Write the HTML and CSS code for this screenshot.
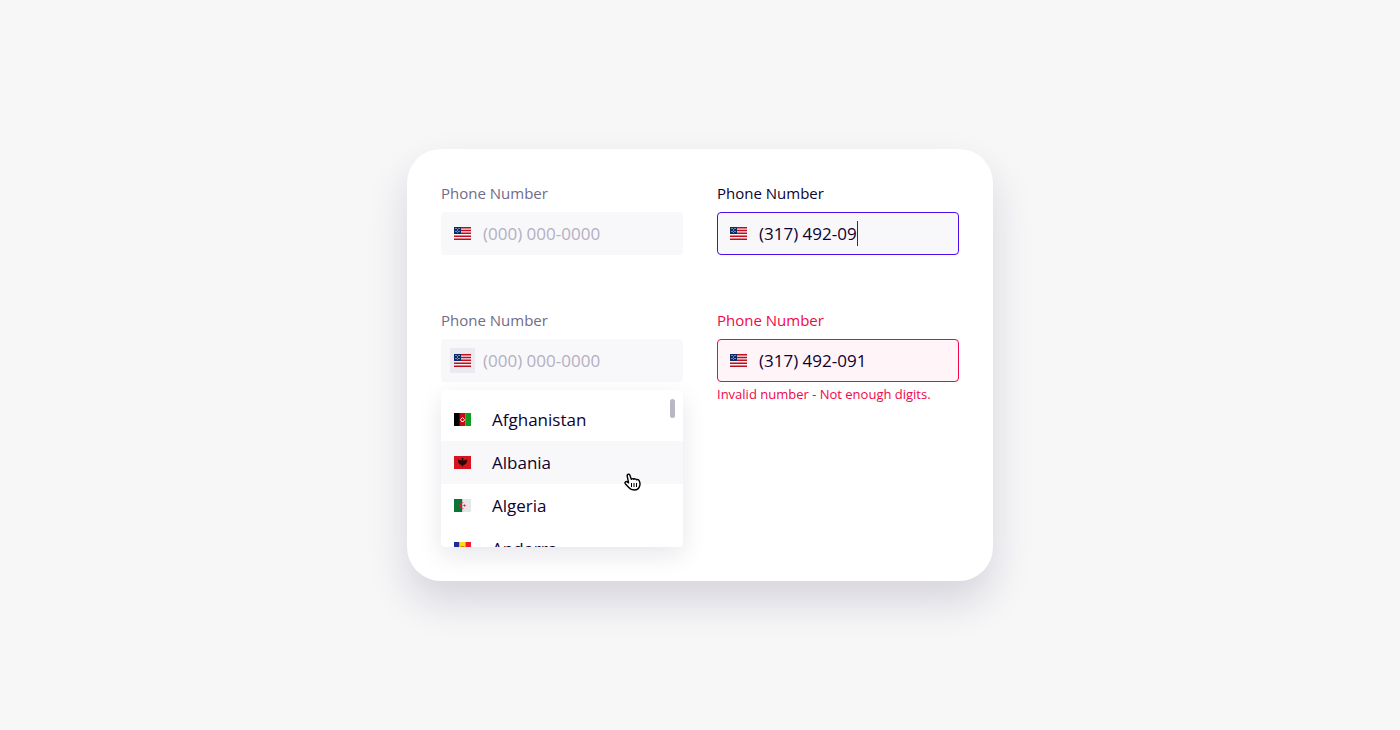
FILE: index.html
```html
<!DOCTYPE html>
<html lang="en">
<head>
<meta charset="utf-8">
<meta name="viewport" content="width=device-width, initial-scale=1">
<title>Phone Number</title>
<link rel="stylesheet" href="styles.css">
</head>
<body>
<svg class="sprite" aria-hidden="true">
  <symbol id="flag-us" viewBox="0 0 34 26">
    <path fill="#f3f0f0" d="M0 0h34v26H0z"/>
    <path fill="#c20b1c" d="M0 0h34v3H0zM0 5.7h34v2.7H0zM0 11.2h34v2.7H0zM0 17h34v3H0zM0 23h34v3H0z"/>
    <path fill="#0b2a66" d="M0 0h14v14H0z"/>
    <path fill="#dfe5f2" d="M3 2h2v2H3zM9 2h2v2H9zM6 5h2v2H6zM3 8h2v2H3zM9 8h2v2H9zM6 11h2v1H6z"/>
  </symbol>
  <symbol id="flag-af" viewBox="0 0 34 26">
    <path fill="#000" d="M0 0h12v26H0z"/>
    <path fill="#c20b14" d="M11 0h12v26H11z"/>
    <path fill="#0f9b1e" d="M23 0h11v26H23z"/>
    <path fill="none" stroke="#fff" stroke-width="2" d="M17 9l-4 4 2 4h4l2-4z"/>
  </symbol>
  <symbol id="flag-al" viewBox="0 0 34 26">
    <path fill="#d9141f" d="M0 0h34v26H0z"/>
    <path fill="#2a0508" d="M16 9l-1-5h4l-1 5 9-2-2 7-3 3-3 1-2 4-2-4-3-1-3-3-2-7z"/>
  </symbol>
  <symbol id="flag-dz" viewBox="0 0 34 26">
    <path fill="#0b7539" d="M0 0h17v26H0z"/>
    <path fill="#e6e6e6" d="M17 0h17v26H17z"/>
    <path fill="#e01835" d="M20 7a6.500 6.500 0 1 0 0 12 5.500 5.500 0 1 1 0-12z"/>
    <path fill="#e01835" d="M17 13l3-1 1-2 1 2 3 1-3 1-1 2-1-2z"/>
  </symbol>
  <symbol id="flag-ad" viewBox="0 0 34 26">
    <path fill="#1d2d91" d="M0 0h11v26H0z"/>
    <path fill="#fcdc0b" d="M11 0h12v26H11z"/>
    <path fill="#ee1c34" d="M23 0h11v26H23z"/>
    <path fill="#d9822b" d="M13 8h8v7l-4 3-4-3z"/>
    <path fill="#c8304a" d="M14 10h6v4h-6z"/>
  </symbol>
</svg>

<main class="card">
  <div class="field">
    <label class="field__label" for="phone-default">Phone Number</label>
    <div class="control">
      <button class="control__country" type="button" aria-label="United States"><svg class="flag"><use href="#flag-us"/></svg></button>
      <input class="control__input" id="phone-default" type="tel" placeholder="(000) 000-0000">
    </div>
  </div>

  <div class="field field--focus">
    <label class="field__label" for="phone-focus">Phone Number</label>
    <div class="control">
      <button class="control__country" type="button" aria-label="United States"><svg class="flag"><use href="#flag-us"/></svg></button>
      <input class="control__input" id="phone-focus" type="tel" value="(317) 492-09">
      <span class="control__caret"></span>
    </div>
  </div>

  <div class="field field--open">
    <label class="field__label" for="phone-open">Phone Number</label>
    <div class="control">
      <button class="control__country" type="button" aria-label="United States" aria-expanded="true"><svg class="flag"><use href="#flag-us"/></svg></button>
      <input class="control__input" id="phone-open" type="tel" placeholder="(000) 000-0000">
    </div>
    <div class="menu">
      <div class="menu__list">
        <button class="menu__item" type="button"><svg class="flag"><use href="#flag-af"/></svg>Afghanistan</button>
        <button class="menu__item menu__item--hover" type="button"><svg class="flag"><use href="#flag-al"/></svg>Albania</button>
        <button class="menu__item" type="button"><svg class="flag"><use href="#flag-dz"/></svg>Algeria</button>
        <button class="menu__item" type="button"><svg class="flag"><use href="#flag-ad"/></svg>Andorra</button>
      </div>
      <span class="menu__thumb"></span>
      <svg class="menu__pointer" viewBox="0 0 17 18" aria-hidden="true">
        <path fill="#fff" stroke="#000" stroke-width="1.4" stroke-linejoin="round" d="M4.600 9.800L3.200 3C2.900 1 5.200.5 5.900 2.200L7.300 6.300C8 5.300 9.300 5.400 9.900 6.300 10.600 5.500 12 5.700 12.500 6.800 13.400 6.200 14.700 6.600 15.200 7.700 16.300 10 16.200 12.300 15.200 14.200 14.200 16.300 12.500 17 10.300 17 7.500 17 6.200 16.300 4.800 14.500L1.300 10.700C.3 9.300 1.900 7.900 3.300 8.900Z"/>
        <path fill="none" stroke="#000" stroke-width="1" d="M7.500 10v4M10 10v4M12.500 10v4"/>
      </svg>
    </div>
  </div>

  <div class="field field--error">
    <label class="field__label" for="phone-error">Phone Number</label>
    <div class="control">
      <button class="control__country" type="button" aria-label="United States"><svg class="flag"><use href="#flag-us"/></svg></button>
      <input class="control__input" id="phone-error" type="tel" value="(317) 492-091" aria-invalid="true" aria-describedby="phone-error-text">
    </div>
    <p class="field__error" id="phone-error-text">Invalid number - Not enough digits.</p>
  </div>
</main>
</body>
</html>
```
FILE: styles.css
```css
* {
  box-sizing: border-box;
}

body {
  margin: 0;
  min-height: 100vh;
  display: grid;
  place-items: center;
  background: #f7f7f8;
  color: #0c0230;
  font-family: "Open Sans", "Noto Sans", sans-serif;
}

button,
input {
  margin: 0;
  padding: 0;
  border: 0;
  background: none;
  color: inherit;
  font: inherit;
}

.sprite {
  position: absolute;
  width: 0;
  height: 0;
}

.card {
  width: 100%;
  max-width: 586px;
  padding: 34px;
  display: grid;
  grid-template-columns: repeat(auto-fit, minmax(220px, 1fr));
  align-items: start;
  gap: 55px 34px;
  border-radius: 34px;
  background: #fff;
  box-shadow: 0 21px 42px rgba(20, 10, 60, 0.14);
}

.field__label {
  display: block;
  margin-bottom: 9px;
  color: #716b8a;
  font-size: 15px;
  line-height: 20px;
}

.control {
  position: relative;
  display: flex;
  align-items: center;
  gap: 8px;
  padding: 8px;
  border: 1px solid transparent;
  border-radius: 4px;
  background: #f8f8fa;
}

.control__country {
  flex: none;
  display: grid;
  place-items: center;
  width: 25px;
  height: 25px;
}

.flag {
  flex: none;
  display: block;
  width: 17px;
  height: 13px;
}

.control__input {
  flex: 1;
  min-width: 0;
  height: 25px;
  outline: 0;
  font-size: 17px;
}

.control__input::placeholder {
  color: #b3afc2;
  opacity: 1;
}

.control__caret {
  position: absolute;
  top: 8px;
  left: 139px;
  width: 1px;
  height: 25px;
  background: #3a10e0;
}

.field--focus .field__label {
  color: #0c0230;
}

.field--focus .control {
  border-color: #4a0df0;
}

.field--open .control__country {
  background: #ebeaf0;
}

.field--error .field__label,
.field__error {
  color: #f2054b;
}

.field--error .control {
  border-color: #f2054b;
  background: #fff5f9;
}

.field__error {
  margin: 3px 0 0;
  font-size: 13px;
  line-height: 19px;
}

.menu {
  position: relative;
  margin-top: 8px;
  border-radius: 4px;
  background: #fff;
  box-shadow: 0 8px 25px rgba(20, 10, 60, 0.1);
}

.menu__list {
  height: 157px;
  padding-top: 8px;
  overflow: hidden;
  border-radius: 4px;
}

.menu__item {
  display: flex;
  align-items: center;
  gap: 21px;
  width: 100%;
  height: 43px;
  padding: 0 13px;
  font-size: 17px;
  text-align: left;
}

.menu__item--hover {
  background: #f8f8fa;
}

.menu__thumb {
  position: absolute;
  top: 9px;
  right: 8px;
  width: 5px;
  height: 19px;
  border-radius: 3px;
  background: #b9b6c6;
}

.menu__pointer {
  position: absolute;
  top: 83px;
  right: 42px;
  width: 17px;
  height: 18px;
}
```
